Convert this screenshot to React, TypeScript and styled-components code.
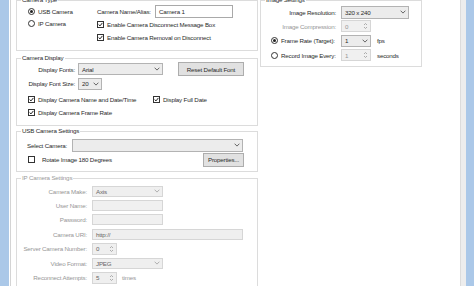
import React from 'react';
import styled, { createGlobalStyle } from 'styled-components';

const GlobalStyle = createGlobalStyle`
  html, body { margin: 0; padding: 0; background: #fff; }
  body {
    font-family: "Liberation Sans", Arial, sans-serif;
    font-size: 6.2px;
    letter-spacing: -0.18px;
    color: #2a2a2a;
  }
`;

type Tone = 'input' | 'combo' | 'off' | 'offValue';

const Window = styled.div`
  display: flex;
  width: 474px;
  height: 286px;
  overflow: hidden;
  background: #fff;
`;

const FrameLeft = styled.div`
  flex: none;
  width: 9px;
  background: #abc8e8;
  border-right: 1px solid #fff;
`;

const Splitter = styled.div`
  flex: none;
  width: 1px;
  background: #d4d4d4;
`;

const FrameRight = styled.div`
  flex: none;
  display: flex;
  width: 14px;
  &::before {
    content: '';
    width: 5px;
    background: #ededed;
    border-left: 1px solid #dcdcdc;
  }
  &::after {
    content: '';
    flex: 1;
    background: #abc8e8;
  }
`;

const Content = styled.div`
  flex: 1;
  display: flex;
  align-items: flex-start;
  gap: 2px;
  padding-left: 5px;
  margin-top: -4px;
`;

const Column = styled.div<{ $w: number }>`
  flex: none;
  width: ${p => p.$w}px;
  display: flex;
  flex-direction: column;
`;

const GroupBox = styled.fieldset<{ $mt?: number }>`
  box-sizing: border-box;
  min-width: 0;
  margin: ${p => p.$mt ?? 0}px 0 0;
  padding: 0;
  border: 1px solid #dcdcdc;
`;

const Legend = styled.legend<{ $off?: boolean }>`
  margin-left: 4px;
  padding: 0 1px;
  line-height: 8px;
  color: ${p => (p.$off ? '#9a9a9a' : '#2a2a2a')};
`;

const Body = styled.div<{ $pad: string }>`
  padding: ${p => p.$pad};
`;

const Split = styled.div`
  display: flex;
`;

const Stack = styled.div<{ $w?: number }>`
  display: flex;
  flex-direction: column;
  ${p => (p.$w ? `width: ${p.$w}px; flex: none;` : 'flex: 1;')}
`;

const Row = styled.div<{ $h: number; $mt?: number }>`
  display: flex;
  align-items: center;
  height: ${p => p.$h}px;
  margin-top: ${p => p.$mt ?? 0}px;
  white-space: nowrap;
`;

const Label = styled.span<{ $w: number; $gap: number; $off?: boolean; $left?: boolean }>`
  flex: none;
  display: flex;
  justify-content: ${p => (p.$left ? 'flex-start' : 'flex-end')};
  width: ${p => p.$w}px;
  margin-right: ${p => p.$gap}px;
  color: ${p => (p.$off ? '#969696' : '#2a2a2a')};
`;

const Text = styled.span<{ $ml?: number; $off?: boolean }>`
  margin-left: ${p => p.$ml ?? 0}px;
  color: ${p => (p.$off ? '#969696' : '#2a2a2a')};
`;

const toneStyles: Record<Tone, string> = {
  input: 'background: #fff; border-color: #a9a9a9; color: #2a2a2a;',
  combo: 'background: #ececec; border-color: #b3b3b3; color: #2a2a2a;',
  off: 'background: #f0f0f0; border-color: #d6d6d6; color: #969696;',
  offValue: 'background: #efefef; border-color: #d6d6d6; color: #666;',
};

const Field = styled.div<{ $w: number; $h?: number; $tone: Tone; $ml?: number }>`
  flex: none;
  box-sizing: border-box;
  display: flex;
  align-items: center;
  justify-content: space-between;
  width: ${p => p.$w}px;
  height: ${p => p.$h ?? 12}px;
  margin-left: ${p => p.$ml ?? 0}px;
  padding: 0 2px 0 3px;
  border: 1px solid;
  ${p => toneStyles[p.$tone]}
`;

const Button = styled.div<{ $w: number; $ml?: string }>`
  flex: none;
  box-sizing: border-box;
  display: flex;
  align-items: center;
  justify-content: center;
  width: ${p => p.$w}px;
  height: 14px;
  margin-left: ${p => p.$ml ?? '0'};
  background: #e1e1e1;
  border: 1px solid #adadad;
`;

const Box = styled.span<{ $round?: boolean }>`
  flex: none;
  box-sizing: border-box;
  display: inline-flex;
  align-items: center;
  justify-content: center;
  width: 7px;
  height: 7px;
  border: 1px solid #333;
  background: #fff;
  border-radius: ${p => (p.$round ? '50%' : '0')};
`;

const Dot = styled.span`
  width: 3px;
  height: 3px;
  border-radius: 50%;
  background: #222;
`;

const Choice = styled.span<{ $w?: number; $gap?: number }>`
  display: inline-flex;
  align-items: center;
  gap: ${p => p.$gap ?? 3}px;
  ${p => (p.$w ? `width: ${p.$w}px; flex: none;` : '')}
`;

const Chevron = ({ color = '#555' }: { color?: string }) => (
  <svg width="6" height="4" viewBox="0 0 6 4">
    <polyline points="0.6,0.7 3,3.1 5.4,0.7" fill="none" stroke={color} strokeWidth="0.9" />
  </svg>
);

const Spin = ({ color = '#777' }: { color?: string }) => (
  <svg width="5" height="8" viewBox="0 0 5 8">
    <polyline points="1,3 2.5,1.5 4,3" fill="none" stroke={color} strokeWidth="0.8" />
    <polyline points="1,5 2.5,6.5 4,5" fill="none" stroke={color} strokeWidth="0.8" />
  </svg>
);

const Check = ({ checked, gap, children, w }: { checked?: boolean; gap?: number; children: React.ReactNode; w?: number }) => (
  <Choice $w={w} $gap={gap}>
    <Box>
      {checked && (
        <svg width="5" height="5" viewBox="0 0 5 5">
          <polyline points="0.6,2.5 2,3.9 4.4,0.9" fill="none" stroke="#222" strokeWidth="1" />
        </svg>
      )}
    </Box>
    <span>{children}</span>
  </Choice>
);

const Radio = ({ checked, children, w }: { checked?: boolean; children: React.ReactNode; w?: number }) => (
  <Choice $w={w} $gap={3}>
    <Box $round>{checked && <Dot />}</Box>
    <span>{children}</span>
  </Choice>
);

const Combo = ({ w, h, value, tone = 'combo', ml }: { w: number; h?: number; value: string; tone?: Tone; ml?: number }) => (
  <Field $w={w} $h={h} $tone={tone} $ml={ml}>
    <span>{value}</span>
    <Chevron color={tone === 'combo' ? '#555' : '#a8a8a8'} />
  </Field>
);

const Spinner = ({ w, value, tone = 'off' }: { w: number; value: string; tone?: Tone }) => (
  <Field $w={w} $tone={tone}>
    <span>{value}</span>
    <Spin color={tone === 'input' ? '#666' : '#9a9a9a'} />
  </Field>
);

const ipRows = 14.4;

export default function App() {
  return (
    <>
      <GlobalStyle />
      <Window>
        <FrameLeft />
        <Splitter />
        <Content>
          <Column $w={242}>
            <GroupBox>
              <Legend>Camera Type</Legend>
              <Body $pad="1px 13px 6px 11px">
                <Split>
                  <Stack $w={69}>
                    <Row $h={12}>
                      <Radio checked>USB Camera</Radio>
                    </Row>
                    <Row $h={12}>
                      <Radio>IP Camera</Radio>
                    </Row>
                  </Stack>
                  <Stack>
                    <Row $h={13}>
                      <Label $w={55} $gap={3} $left>Camera Name/Alias:</Label>
                      <Field $w={78} $h={13} $tone="input">Camera 1</Field>
                    </Row>
                    <Row $h={13}>
                      <Check checked>Enable Camera Disconnect Message Box</Check>
                    </Row>
                    <Row $h={13}>
                      <Check checked>Enable Camera Removal on Disconnect</Check>
                    </Row>
                  </Stack>
                </Split>
              </Body>
            </GroupBox>

            <GroupBox $mt={3}>
              <Legend>Camera Display</Legend>
              <Body $pad="0 13px 6px 10px">
                <Row $h={14}>
                  <Label $w={48} $gap={3}>Display Fonts:</Label>
                  <Combo w={85} value="Arial" />
                  <Button $w={66} $ml="auto">Reset Default Font</Button>
                </Row>
                <Row $h={15}>
                  <Label $w={48} $gap={3}>Display Font Size:</Label>
                  <Combo w={24} value="20" />
                </Row>
                <Row $h={13} $mt={2}>
                  <Text $ml={1} />
                  <Check checked w={125} gap={3}>Display Camera Name and Date/Time</Check>
                  <Check checked gap={3}>Display Full Date</Check>
                </Row>
                <Row $h={13}>
                  <Text $ml={1} />
                  <Check checked gap={3}>Display Camera Frame Rate</Check>
                </Row>
              </Body>
            </GroupBox>

            <GroupBox $mt={1}>
              <Legend>USB Camera Settings</Legend>
              <Body $pad="3px 13px 4px 10px">
                <Row $h={14}>
                  <Label $w={43} $gap={2} $left>Select Camera:</Label>
                  <Combo w={171} h={13} value="" />
                </Row>
                <Row $h={15}>
                  <Text $ml={1} />
                  <Check gap={7}>Rotate Image 180 Degrees</Check>
                  <Button $w={41} $ml="auto">Properties...</Button>
                </Row>
              </Body>
            </GroupBox>

            <GroupBox $mt={2}>
              <Legend $off>IP Camera Settings</Legend>
              <Body $pad="2px 13px 6px 10px">
                <Row $h={ipRows}>
                  <Label $w={60} $gap={5} $off>Camera Make:</Label>
                  <Combo w={71} h={11} value="Axis" tone="offValue" />
                </Row>
                <Row $h={ipRows}>
                  <Label $w={60} $gap={5} $off>User Name:</Label>
                  <Field $w={71} $h={11} $tone="off" />
                </Row>
                <Row $h={ipRows}>
                  <Label $w={60} $gap={5} $off>Password:</Label>
                  <Field $w={71} $h={11} $tone="off" />
                </Row>
                <Row $h={ipRows}>
                  <Label $w={60} $gap={5} $off>Camera URI:</Label>
                  <Field $w={151} $h={11} $tone="offValue">http://</Field>
                </Row>
                <Row $h={ipRows}>
                  <Label $w={60} $gap={5} $off>Server Camera Number:</Label>
                  <Spinner w={25} value="0" tone="offValue" />
                </Row>
                <Row $h={ipRows}>
                  <Label $w={60} $gap={5} $off>Video Format:</Label>
                  <Combo w={71} h={11} value="JPEG" tone="offValue" />
                </Row>
                <Row $h={ipRows}>
                  <Label $w={60} $gap={5} $off>Reconnect Attempts:</Label>
                  <Spinner w={25} value="5" tone="offValue" />
                  <Text $ml={5} $off>times</Text>
                </Row>
              </Body>
            </GroupBox>
          </Column>

          <Column $w={162}>
            <GroupBox>
              <Legend>Image Settings</Legend>
              <Body $pad="1px 12px 4px 10px">
                <Row $h={14}>
                  <Label $w={65} $gap={5}>Image Resolution:</Label>
                  <Combo w={68} h={13} value="320 x 240" />
                </Row>
                <Row $h={14}>
                  <Label $w={65} $gap={5} $off>Image Compression:</Label>
                  <Spinner w={30} value="0" />
                </Row>
                <Row $h={15}>
                  <Label $w={65} $gap={5} $left>
                    <Radio checked>Frame Rate (Target):</Radio>
                  </Label>
                  <Combo w={30} value="1" />
                  <Text $ml={6}>fps</Text>
                </Row>
                <Row $h={14}>
                  <Label $w={65} $gap={5} $left>
                    <Radio>Record Image Every:</Radio>
                  </Label>
                  <Spinner w={30} value="1" />
                  <Text $ml={6}>seconds</Text>
                </Row>
              </Body>
            </GroupBox>
          </Column>
        </Content>
        <FrameRight />
      </Window>
    </>
  );
}
